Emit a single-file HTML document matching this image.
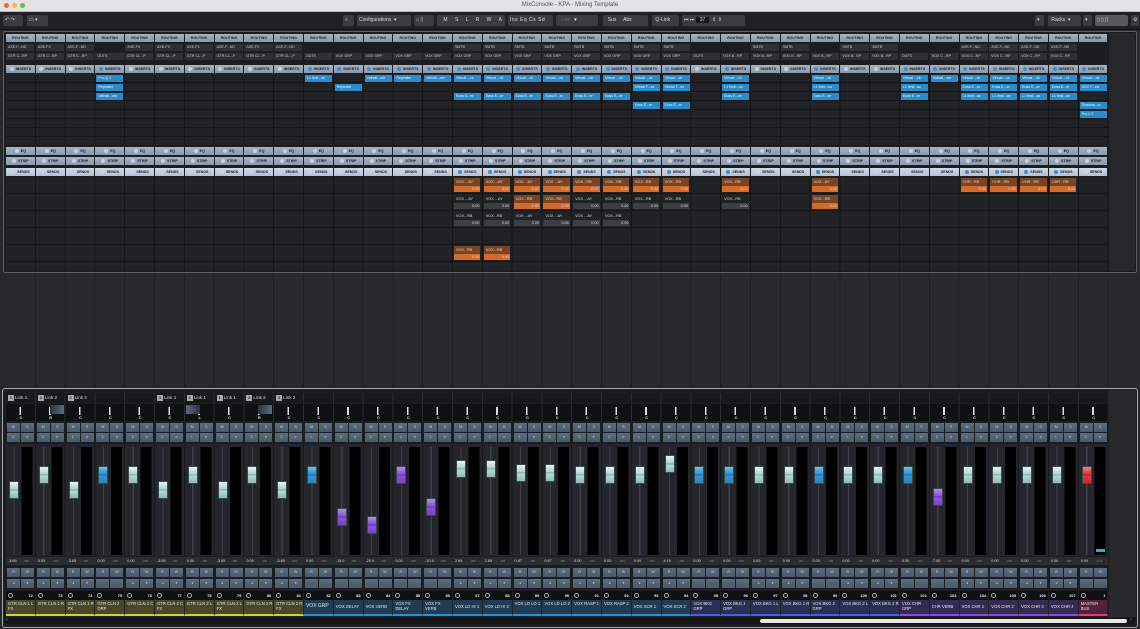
<!DOCTYPE html>
<html><head><meta charset="utf-8"><style>
*{box-sizing:border-box;margin:0;padding:0}
body{width:1140px;height:629px;overflow:hidden;background:#26282c;font-family:"Liberation Sans",sans-serif;position:relative;color:#ddd}
i,em,s,b{font-style:normal;text-decoration:none}
.a{position:absolute}
.r{position:absolute;left:6px;display:flex}
.r>*{width:29.8px;flex:none;position:relative;overflow:hidden;white-space:nowrap;font-style:normal}
.title{left:0;top:0;width:1140px;height:12px;background:#e4e2e4;color:#555;font-size:6px;text-align:center;line-height:11px;border-bottom:1px solid #bbb}
.dot{width:5px;height:5px;border-radius:50%;top:3px}
.tb{left:0;top:12px;width:1140px;height:18px;background:#202124;border-bottom:1px solid #111}
.bt{position:absolute;top:15px;height:11px;background:#3a3c40;border-radius:2px;color:#ddd;font-size:5px;line-height:11px;padding:0 2px;white-space:nowrap}
.hd>*{height:8px;font-size:3.6px;font-weight:bold;color:#1a1d22;line-height:8px;text-align:center;border-right:1px solid #1c1d20;background:linear-gradient(#a6b3c3,#8a98ab)}
.hd.sd>*{background:linear-gradient(#ced9e5,#b3c1d1)}
.hd .o{display:inline-block;width:4px;height:4px;border-radius:50%;background:#c8d0da;vertical-align:middle;margin-right:2px;margin-top:-1px}
.hd .b{background:#3b8fd0}
.sl>*{height:8px;padding:1px 1.5px 0 0}
.sl span{display:block;height:7px;background:#2e3034;font-size:3.6px;line-height:7px;color:#ccc;padding-left:2px}
.pl{position:absolute;left:1px;width:27px;height:7px;background:#2b8ccc;color:#e8f4ff;font-size:3.6px;line-height:7px;padding-left:2px}
.sn{position:absolute;left:1px;width:26.5px;height:15px;font-size:3.8px;color:#ddd}
.sn b{display:block;height:8px;line-height:8px;font-weight:normal;padding-left:2px}
.sn i{display:block;height:6px;line-height:6px;text-align:right;padding-right:1px;background:#3b3e43}
.sn.or b{background:#7a4322}
.sn.or i{background:#d36b2c}
.cap{position:absolute;left:3px;width:10px;height:18px;border-radius:1px;background:linear-gradient(#e3f5f2,#a9d3cd 45%,#6f9c96 50%,#b5dcd6 55%,#8fbab4);border:1px solid #3a4a48}
.cap.bl{background:linear-gradient(#6cc0f0,#2f8fd0 45%,#1d5f90 50%,#3696d6 55%,#2a80bc)}
.cap.pu{background:linear-gradient(#b88af2,#8a4fd8 45%,#52289a 50%,#8d55dc 55%,#7642c4)}
.cap.rd{background:linear-gradient(#ff7a80,#e0303a 45%,#8a1018 50%,#e23a42 55%,#c8262e)}
.btn2>*{height:10px;padding:1px 0 0 1px}
.btn2 span{float:left;width:13px;height:9px;margin-right:1px;background:linear-gradient(#5e6c80,#4b586a);font-size:3.6px;line-height:9px;text-align:center;color:#c8d2de}
.val>*{height:8px;font-size:3.8px;line-height:8px;color:#ddd}
.val span{position:absolute;left:2px}
.val em{position:absolute;left:17px;color:#888}
.num>*{height:9px;background:#0e0f10;font-size:4px;font-weight:bold;line-height:9px;text-align:right;padding-right:2px;color:#eee;border-right:1px solid #222}
.num>* s{position:absolute;left:2px;top:2px;width:5px;height:5px;border:0.7px solid #aaa;border-radius:50%}
.nm>*{height:16px;font-size:4.2px;line-height:4.8px;padding:2px 0 0 2px;color:#e8e8e8;white-space:normal;border-right:1px solid #222}
.g{background:#47482a;border-bottom:2px solid #c9d63a}
.u{background:#1f3b56;border-bottom:2px solid #2f8ed8}
.k{background:#2b2f58;border-bottom:2px solid #4a5ee0}
.p{background:#352a55;border-bottom:2px solid #8a4ae0}
.m{background:#552038;border-bottom:2px solid #e03a7a}
.lk{position:absolute;top:1px;left:2px;font-size:4.6px;color:#ddd;line-height:7px}
.lk b{display:inline-block;width:6px;height:6px;background:#aaa;color:#222;font-size:4px;text-align:center;line-height:6px;margin-right:1px}
</style></head><body>

<div class="a title">MixConsole - KPA - Mixing Template</div>
<div class="a dot" style="left:4px;background:#ec5f57"></div>
<div class="a dot" style="left:12px;background:#f5bd2e"></div>
<div class="a dot" style="left:20px;background:#5ec43f"></div>

<div class="a tb"></div>
<div class="bt" style="left:3px;width:20px">↶ ↷</div>
<div class="bt" style="left:27px;width:21px">▭ ▾</div>
<div class="bt" style="left:343px;width:11px">⌕</div>
<div class="bt" style="left:357px;width:54px">Configurations&nbsp;&nbsp;▾</div>
<div class="bt" style="left:414px;width:20px">⌂ ▯</div>
<div class="bt" style="left:437px;width:68px;letter-spacing:3px">&nbsp;M S L R W A</div>
<div class="bt" style="left:508px;width:45px;letter-spacing:.5px">Ins Eq Cs Sd</div>
<div class="bt" style="left:556px;width:42px;color:#666">&nbsp;&nbsp;Link &nbsp;&nbsp;<span style="color:#fff">▾</span></div>
<div class="bt" style="left:603px;width:45px">&nbsp;&nbsp;Sus &nbsp;&nbsp;&nbsp; Abs</div>
<div class="bt" style="left:652px;width:27px">&nbsp;Q-Link</div>
<div class="bt" style="left:682px;width:63px">⏮ ⏭ <span style="background:#151617;padding:0 4px">37</span>&nbsp;&nbsp;⇕ ⇕</div>
<div class="bt" style="left:1035px;width:9px">▾</div>
<div class="bt" style="left:1048px;width:33px">&nbsp;Racks &nbsp;▾</div>
<div class="bt" style="left:1083px;width:9px">▾</div>
<div class="bt" style="left:1095px;width:33px;background:#55585e">▯ ▯ ▯</div>
<div class="bt" style="left:1131px;width:8px">⚙</div>

<!-- upper panel -->
<div class="a" style="left:3px;top:31px;width:1134px;height:242px;background:#1c1d20;border:1px solid #5d6066;border-radius:2px"></div>
<div class="a" style="left:1109px;top:33px;width:26px;height:238px;background:#25272a"></div>

<div class="r hd" style="top:34px"><i>ROUTING</i><i>ROUTING</i><i>ROUTING</i><i>ROUTING</i><i>ROUTING</i><i>ROUTING</i><i>ROUTING</i><i>ROUTING</i><i>ROUTING</i><i>ROUTING</i><i>ROUTING</i><i>ROUTING</i><i>ROUTING</i><i>ROUTING</i><i>ROUTING</i><i>ROUTING</i><i>ROUTING</i><i>ROUTING</i><i>ROUTING</i><i>ROUTING</i><i>ROUTING</i><i>ROUTING</i><i>ROUTING</i><i>ROUTING</i><i>ROUTING</i><i>ROUTING</i><i>ROUTING</i><i>ROUTING</i><i>ROUTING</i><i>ROUTING</i><i>ROUTING</i><i>ROUTING</i><i>ROUTING</i><i>ROUTING</i><i>ROUTING</i><i>ROUTING</i><i>ROUTING</i></div>
<div class="r sl" style="top:43px"><i><span>AXE-F...ND</span></i><i><span>AXE-FX</span></i><i><span>AXE-F...ND</span></i><i></i><i><span>AXE-FX</span></i><i><span>AXE-FX</span></i><i><span>AXE-FX</span></i><i><span>AXE-F...ND</span></i><i><span>AXE-FX</span></i><i><span>AXE-F...ND</span></i><i></i><i></i><i></i><i></i><i></i><i><span>SMTB</span></i><i><span>SMTB</span></i><i><span>SMTB</span></i><i><span>SMTB</span></i><i><span>SMTB</span></i><i><span>SMTB</span></i><i><span>SMTB</span></i><i><span>SMTB</span></i><i></i><i></i><i><span>SMTB</span></i><i><span>SMTB</span></i><i></i><i><span>SMTB</span></i><i><span>SMTB</span></i><i></i><i></i><i><span>AXE-F...ND</span></i><i><span>AXE-F...ND</span></i><i><span>AXE-F...ND</span></i><i><span>AXE-F...ND</span></i><i></i></div>
<div class="r sl" style="top:52px"><i><span>GTR C...RP</span></i><i><span>GTR C...RP</span></i><i><span>GTR C...RP</span></i><i><span>OUTS</span></i><i><span>GTR CL...P</span></i><i><span>GTR CL...P</span></i><i><span>GTR CL...P</span></i><i><span>GTR CL...P</span></i><i><span>GTR CL...P</span></i><i><span>GTR CL...P</span></i><i><span>OUTS</span></i><i><span>VOX GRP</span></i><i><span>VOX GRP</span></i><i><span>VOX GRP</span></i><i><span>VOX GRP</span></i><i><span>VOX GRP</span></i><i><span>VOX GRP</span></i><i><span>VOX GRP</span></i><i><span>VOX GRP</span></i><i><span>VOX GRP</span></i><i><span>VOX GRP</span></i><i><span>VOX GRP</span></i><i><span>VOX GRP</span></i><i><span>OUTS</span></i><i><span>VOX B...RP</span></i><i><span>VOX B...RP</span></i><i><span>VOX B...RP</span></i><i><span>VOX B...RP</span></i><i><span>VOX B...RP</span></i><i><span>VOX B...RP</span></i><i><span>OUTS</span></i><i><span>VOX C...RP</span></i><i><span>VOX C...RP</span></i><i><span>VOX C...RP</span></i><i><span>VOX C...RP</span></i><i><span>VOX C...RP</span></i><i></i></div>

<div class="r hd" style="top:65px"><i><s class="o"></s>INSERTS</i><i><s class="o"></s>INSERTS</i><i><s class="o"></s>INSERTS</i><i><s class="o b"></s>INSERTS</i><i><s class="o"></s>INSERTS</i><i><s class="o"></s>INSERTS</i><i><s class="o"></s>INSERTS</i><i><s class="o"></s>INSERTS</i><i><s class="o"></s>INSERTS</i><i><s class="o"></s>INSERTS</i><i><s class="o b"></s>INSERTS</i><i><s class="o b"></s>INSERTS</i><i><s class="o b"></s>INSERTS</i><i><s class="o b"></s>INSERTS</i><i><s class="o b"></s>INSERTS</i><i><s class="o b"></s>INSERTS</i><i><s class="o b"></s>INSERTS</i><i><s class="o b"></s>INSERTS</i><i><s class="o b"></s>INSERTS</i><i><s class="o b"></s>INSERTS</i><i><s class="o b"></s>INSERTS</i><i><s class="o b"></s>INSERTS</i><i><s class="o b"></s>INSERTS</i><i><s class="o"></s>INSERTS</i><i><s class="o b"></s>INSERTS</i><i><s class="o"></s>INSERTS</i><i><s class="o"></s>INSERTS</i><i><s class="o b"></s>INSERTS</i><i><s class="o"></s>INSERTS</i><i><s class="o"></s>INSERTS</i><i><s class="o b"></s>INSERTS</i><i><s class="o b"></s>INSERTS</i><i><s class="o b"></s>INSERTS</i><i><s class="o b"></s>INSERTS</i><i><s class="o b"></s>INSERTS</i><i><s class="o b"></s>INSERTS</i><i><s class="o b"></s>INSERTS</i></div>
<div class="a" style="left:6px;top:74px;width:1102.6px;height:71px;background:repeating-linear-gradient(90deg,transparent 0 28.8px,#141517 28.8px 29.8px),repeating-linear-gradient(180deg,#212225 0 8px,#151618 8px 9px)"></div>
<div class="r" style="top:74px;height:72px"><i></i><i></i><i></i><i><span class="pl" style="top:1px">Pro-Q 3</span><span class="pl" style="top:10px">Repeater</span><span class="pl" style="top:19px">Valhall...om</span></i><i></i><i></i><i></i><i></i><i></i><i></i><i><span class="pl" style="top:1px">L1 limit...ac</span></i><i><span class="pl" style="top:10px">Repeater</span></i><i><span class="pl" style="top:1px">Valhall...om</span></i><i><span class="pl" style="top:1px">Repeater</span></i><i><span class="pl" style="top:1px">Valhall...om</span></i><i><span class="pl" style="top:1px">Virtual ...ck</span><span class="pl" style="top:19px">Eoss E...er</span></i><i><span class="pl" style="top:1px">Virtual ...ck</span><span class="pl" style="top:19px">Eoss E...er</span></i><i><span class="pl" style="top:1px">Virtual ...ck</span><span class="pl" style="top:19px">Eoss E...er</span></i><i><span class="pl" style="top:1px">Virtual ...ck</span><span class="pl" style="top:19px">Eoss E...er</span></i><i><span class="pl" style="top:1px">Virtual ...ck</span><span class="pl" style="top:19px">Eoss E...er</span></i><i><span class="pl" style="top:1px">Virtual ...ck</span><span class="pl" style="top:19px">Eoss E...er</span></i><i><span class="pl" style="top:1px">Virtual ...ck</span><span class="pl" style="top:10px">Virtual T...ex</span><span class="pl" style="top:28px">Eoss E...er</span></i><i><span class="pl" style="top:1px">Virtual ...ck</span><span class="pl" style="top:10px">Virtual T...ex</span><span class="pl" style="top:28px">Eoss E...er</span></i><i></i><i><span class="pl" style="top:1px">Virtual ...ck</span><span class="pl" style="top:10px">L1 limit...no</span><span class="pl" style="top:19px">Eoss E...er</span></i><i></i><i></i><i><span class="pl" style="top:1px">Virtual ...ck</span><span class="pl" style="top:10px">L1 limit...no</span><span class="pl" style="top:19px">Eoss E...er</span></i><i></i><i></i><i><span class="pl" style="top:1px">Virtual ...ck</span><span class="pl" style="top:10px">L1 limit...ac</span><span class="pl" style="top:19px">Eoss E...er</span></i><i><span class="pl" style="top:1px">Valhall...om</span></i><i><span class="pl" style="top:1px">Virtual ...ck</span><span class="pl" style="top:10px">Eoss E...er</span><span class="pl" style="top:19px">L1 limit...ac</span></i><i><span class="pl" style="top:1px">Virtual ...ck</span><span class="pl" style="top:10px">Eoss E...er</span><span class="pl" style="top:19px">L1 limit...ac</span></i><i><span class="pl" style="top:1px">Virtual ...ck</span><span class="pl" style="top:10px">Eoss E...er</span><span class="pl" style="top:19px">L1 limit...ac</span></i><i><span class="pl" style="top:1px">Virtual ...ck</span><span class="pl" style="top:10px">Eoss E...er</span><span class="pl" style="top:19px">L1 limit...ac</span></i><i><span class="pl" style="top:1px">Virtual ...ck</span><span class="pl" style="top:10px">VSC F...ed</span><span class="pl" style="top:28px">Shadow...or</span><span class="pl" style="top:37px">Pro-L 2</span></i></div>

<div class="r hd" style="top:147px"><i><s class="o"></s>EQ</i><i><s class="o"></s>EQ</i><i><s class="o"></s>EQ</i><i><s class="o"></s>EQ</i><i><s class="o"></s>EQ</i><i><s class="o"></s>EQ</i><i><s class="o"></s>EQ</i><i><s class="o"></s>EQ</i><i><s class="o"></s>EQ</i><i><s class="o"></s>EQ</i><i><s class="o"></s>EQ</i><i><s class="o"></s>EQ</i><i><s class="o"></s>EQ</i><i><s class="o"></s>EQ</i><i><s class="o"></s>EQ</i><i><s class="o"></s>EQ</i><i><s class="o"></s>EQ</i><i><s class="o"></s>EQ</i><i><s class="o"></s>EQ</i><i><s class="o"></s>EQ</i><i><s class="o"></s>EQ</i><i><s class="o"></s>EQ</i><i><s class="o"></s>EQ</i><i><s class="o"></s>EQ</i><i><s class="o"></s>EQ</i><i><s class="o"></s>EQ</i><i><s class="o"></s>EQ</i><i><s class="o"></s>EQ</i><i><s class="o"></s>EQ</i><i><s class="o"></s>EQ</i><i><s class="o"></s>EQ</i><i><s class="o"></s>EQ</i><i><s class="o"></s>EQ</i><i><s class="o"></s>EQ</i><i><s class="o"></s>EQ</i><i><s class="o"></s>EQ</i><i><s class="o"></s>EQ</i></div>
<div class="r hd" style="top:157px"><i><s class="o"></s>STRIP</i><i><s class="o"></s>STRIP</i><i><s class="o"></s>STRIP</i><i><s class="o"></s>STRIP</i><i><s class="o"></s>STRIP</i><i><s class="o"></s>STRIP</i><i><s class="o"></s>STRIP</i><i><s class="o"></s>STRIP</i><i><s class="o"></s>STRIP</i><i><s class="o"></s>STRIP</i><i><s class="o"></s>STRIP</i><i><s class="o"></s>STRIP</i><i><s class="o"></s>STRIP</i><i><s class="o"></s>STRIP</i><i><s class="o"></s>STRIP</i><i><s class="o"></s>STRIP</i><i><s class="o"></s>STRIP</i><i><s class="o"></s>STRIP</i><i><s class="o"></s>STRIP</i><i><s class="o"></s>STRIP</i><i><s class="o"></s>STRIP</i><i><s class="o"></s>STRIP</i><i><s class="o"></s>STRIP</i><i><s class="o"></s>STRIP</i><i><s class="o"></s>STRIP</i><i><s class="o"></s>STRIP</i><i><s class="o"></s>STRIP</i><i><s class="o"></s>STRIP</i><i><s class="o"></s>STRIP</i><i><s class="o"></s>STRIP</i><i><s class="o"></s>STRIP</i><i><s class="o"></s>STRIP</i><i><s class="o"></s>STRIP</i><i><s class="o"></s>STRIP</i><i><s class="o"></s>STRIP</i><i><s class="o"></s>STRIP</i><i><s class="o"></s>STRIP</i></div>
<div class="r hd sd" style="top:168px"><i><s class="o"></s>SENDS</i><i><s class="o"></s>SENDS</i><i><s class="o"></s>SENDS</i><i><s class="o"></s>SENDS</i><i><s class="o"></s>SENDS</i><i><s class="o"></s>SENDS</i><i><s class="o"></s>SENDS</i><i><s class="o"></s>SENDS</i><i><s class="o"></s>SENDS</i><i><s class="o"></s>SENDS</i><i><s class="o"></s>SENDS</i><i><s class="o"></s>SENDS</i><i><s class="o"></s>SENDS</i><i><s class="o"></s>SENDS</i><i><s class="o"></s>SENDS</i><i><s class="o b"></s>SENDS</i><i><s class="o b"></s>SENDS</i><i><s class="o b"></s>SENDS</i><i><s class="o b"></s>SENDS</i><i><s class="o b"></s>SENDS</i><i><s class="o b"></s>SENDS</i><i><s class="o b"></s>SENDS</i><i><s class="o b"></s>SENDS</i><i><s class="o"></s>SENDS</i><i><s class="o b"></s>SENDS</i><i><s class="o"></s>SENDS</i><i><s class="o"></s>SENDS</i><i><s class="o b"></s>SENDS</i><i><s class="o"></s>SENDS</i><i><s class="o"></s>SENDS</i><i><s class="o"></s>SENDS</i><i><s class="o"></s>SENDS</i><i><s class="o b"></s>SENDS</i><i><s class="o b"></s>SENDS</i><i><s class="o b"></s>SENDS</i><i><s class="o b"></s>SENDS</i><i><s class="o"></s>SENDS</i></div>
<div class="a" style="left:6px;top:177px;width:1102.6px;height:94px;background:repeating-linear-gradient(90deg,transparent 0 28.8px,#141517 28.8px 29.8px),repeating-linear-gradient(180deg,#212225 0 16px,#151618 16px 17px)"></div>
<div class="r" style="top:178px;height:92px"><i></i><i></i><i></i><i></i><i></i><i></i><i></i><i></i><i></i><i></i><i></i><i></i><i></i><i></i><i></i>
<i><span class="sn or" style="top:0"><b>VOX ...AY</b><i>0.00</i></span><span class="sn" style="top:17px"><b>VOX ...AY</b><i>0.00</i></span><span class="sn" style="top:34px"><b>VOX...RB</b><i>0.00</i></span><span class="sn or" style="top:68px"><b>VOX...RB</b><i>0.00</i></span></i>
<i><span class="sn or" style="top:0"><b>VOX ...AY</b><i>0.00</i></span><span class="sn" style="top:17px"><b>VOX ...AY</b><i>0.00</i></span><span class="sn" style="top:34px"><b>VOX...RB</b><i>0.00</i></span><span class="sn or" style="top:68px"><b>VOX...RB</b><i>0.00</i></span></i>
<i><span class="sn or" style="top:0"><b>VOX ...AY</b><i>0.00</i></span><span class="sn or" style="top:17px"><b>VOX...RB</b><i>0.00</i></span><span class="sn" style="top:34px"><b>VOX ...AY</b><i>0.00</i></span></i>
<i><span class="sn or" style="top:0"><b>VOX ...AY</b><i>0.00</i></span><span class="sn or" style="top:17px"><b>VOX...RB</b><i>0.00</i></span><span class="sn" style="top:34px"><b>VOX ...AY</b><i>0.00</i></span></i>
<i><span class="sn or" style="top:0"><b>VOX...RB</b><i>0.00</i></span><span class="sn" style="top:17px"><b>VOX ...AY</b><i>0.00</i></span><span class="sn" style="top:34px"><b>VOX ...AY</b><i>0.00</i></span></i>
<i><span class="sn or" style="top:0"><b>VOX...RB</b><i>0.00</i></span><span class="sn" style="top:17px"><b>VOX...RB</b><i>0.00</i></span><span class="sn" style="top:34px"><b>VOX...RB</b><i>0.00</i></span></i>
<i><span class="sn or" style="top:0"><b>VOX...RB</b><i>0.00</i></span><span class="sn" style="top:17px"><b>VOX...RB</b><i>0.00</i></span></i>
<i><span class="sn or" style="top:0"><b>VOX...RB</b><i>0.00</i></span><span class="sn" style="top:17px"><b>VOX...RB</b><i>0.00</i></span></i>
<i></i>
<i><span class="sn or" style="top:0"><b>VOX...RB</b><i>4.00</i></span><span class="sn" style="top:17px"><b>VOX...RB</b><i>0.00</i></span></i>
<i></i><i></i>
<i><span class="sn or" style="top:0"><b>VOX...AY</b><i>4.00</i></span><span class="sn or" style="top:17px"><b>VOX...RB</b><i>0.00</i></span></i>
<i></i><i></i><i></i><i></i>
<i><span class="sn or" style="top:0"><b>CHR...RB</b><i>0.00</i></span></i>
<i><span class="sn or" style="top:0"><b>CHR...RB</b><i>0.00</i></span></i>
<i><span class="sn or" style="top:0"><b>CHR...RB</b><i>0.00</i></span></i>
<i><span class="sn or" style="top:0"><b>CHR...RB</b><i>0.00</i></span></i>
<i></i></div>

<!-- gap -->
<div class="a" style="left:6px;top:274px;width:1102.6px;height:113px;background:repeating-linear-gradient(90deg,#27292d 0 28.8px,#1d1e21 28.8px 29.8px)"></div>

<!-- lower panel -->
<div class="a" style="left:2px;top:388px;width:1136px;height:240px;background:#1c1d20;border:1px solid #a6a9ae;border-radius:3px"></div>
<div class="a" style="left:1109px;top:390px;width:27px;height:227px;background:#27292c"></div>
<div class="a" style="left:6px;top:393px;width:1102.6px;height:10px;background:repeating-linear-gradient(90deg,#17181a 0 28.8px,#2a2c30 28.8px 29.8px)"></div>
<div class="r" style="top:393px;height:10px"><i><span class="lk"><b>1</b>Link 1</span></i><i><span class="lk"><b>2</b>Link 2</span></i><i><span class="lk"><b>2</b>Link 2</span></i><i></i><i></i><i><span class="lk"><b>1</b>Link 1</span></i><i><span class="lk"><b>1</b>Link 1</span></i><i><span class="lk"><b>1</b>Link 1</span></i><i><span class="lk"><b>2</b>Link 2</span></i><i><span class="lk"><b>2</b>Link 2</span></i></div>
<div class="a" style="left:6px;top:404px;width:1102.6px;height:17px;background:repeating-linear-gradient(90deg,#0f1011 0 28.8px,#2a2c30 28.8px 29.8px)"></div>
<div class="a" style="left:6px;top:407px;width:1102.6px;height:8px;background:repeating-linear-gradient(90deg,transparent 0 13.4px,#d8dde2 13.4px 15px,transparent 15px 29.8px)"></div>
<div class="r" style="top:415px;height:6px;font-size:4px;color:#ddd;text-align:center;font-weight:bold"><i>C</i><i>R</i><i>C</i><i>C</i><i>C</i><i>C</i><i>L</i><i>C</i><i>R</i><i>C</i><i>C</i><i>C</i><i>C</i><i>C</i><i>C</i><i>C</i><i>C</i><i>C</i><i>C</i><i>C</i><i>C</i><i>C</i><i>C</i><i>C</i><i>C</i><i>C</i><i>C</i><i>C</i><i>C</i><i>C</i><i>C</i><i>C</i><i>C</i><i>C</i><i>C</i><i>C</i><i>C</i></div>
<div class="a" style="left:50px;top:405px;width:14px;height:9px;background:linear-gradient(90deg,#2a3440,#5c6c7c)"></div>
<div class="a" style="left:186px;top:405px;width:14px;height:9px;background:linear-gradient(90deg,#5c6c7c,#2a3440)"></div>
<div class="a" style="left:258px;top:405px;width:14px;height:9px;background:linear-gradient(90deg,#2a3440,#5c6c7c)"></div>
<div class="r btn2" style="top:422px"><i><span>M</span><span>S</span></i><i><span>M</span><span>S</span></i><i><span>M</span><span>S</span></i><i><span>M</span><span>S</span></i><i><span>M</span><span>S</span></i><i><span>M</span><span>S</span></i><i><span>M</span><span>S</span></i><i><span>M</span><span>S</span></i><i><span>M</span><span>S</span></i><i><span>M</span><span>S</span></i><i><span>M</span><span>S</span></i><i><span>M</span><span>S</span></i><i><span>M</span><span>S</span></i><i><span>M</span><span>S</span></i><i><span>M</span><span>S</span></i><i><span>M</span><span>S</span></i><i><span>M</span><span>S</span></i><i><span>M</span><span>S</span></i><i><span>M</span><span>S</span></i><i><span>M</span><span>S</span></i><i><span>M</span><span>S</span></i><i><span>M</span><span>S</span></i><i><span>M</span><span>S</span></i><i><span>M</span><span>S</span></i><i><span>M</span><span>S</span></i><i><span>M</span><span>S</span></i><i><span>M</span><span>S</span></i><i><span>M</span><span>S</span></i><i><span>M</span><span>S</span></i><i><span>M</span><span>S</span></i><i><span>M</span><span>S</span></i><i><span>M</span><span>S</span></i><i><span>M</span><span>S</span></i><i><span>M</span><span>S</span></i><i><span>M</span><span>S</span></i><i><span>M</span><span>S</span></i><i><span>M</span><span>S</span></i></div>
<div class="r btn2" style="top:432px"><i><span>L</span><span>e</span></i><i><span>L</span><span>e</span></i><i><span>L</span><span>e</span></i><i><span>L</span><span>e</span></i><i><span>L</span><span>e</span></i><i><span>L</span><span>e</span></i><i><span>L</span><span>e</span></i><i><span>L</span><span>e</span></i><i><span>L</span><span>e</span></i><i><span>L</span><span>e</span></i><i><span>L</span><span>e</span></i><i><span>L</span><span>e</span></i><i><span>L</span><span>e</span></i><i><span>L</span><span>e</span></i><i><span>L</span><span>e</span></i><i><span>L</span><span>e</span></i><i><span>L</span><span>e</span></i><i><span>L</span><span>e</span></i><i><span>L</span><span>e</span></i><i><span>L</span><span>e</span></i><i><span>L</span><span>e</span></i><i><span>L</span><span>e</span></i><i><span>L</span><span>e</span></i><i><span>L</span><span>e</span></i><i><span>L</span><span>e</span></i><i><span>L</span><span>e</span></i><i><span>L</span><span>e</span></i><i><span>L</span><span>e</span></i><i><span>L</span><span>e</span></i><i><span>L</span><span>e</span></i><i><span>L</span><span>e</span></i><i><span>L</span><span>e</span></i><i><span>L</span><span>e</span></i><i><span>L</span><span>e</span></i><i><span>L</span><span>e</span></i><i><span>L</span><span>e</span></i><i><span>L</span><span>e</span></i></div>
<div class="a" style="left:6px;top:444px;width:1102.6px;height:112px;background:repeating-linear-gradient(90deg,#24262a 0 28.8px,#17181a 28.8px 29.8px)"></div>
<div class="a" style="left:6px;top:447px;width:1102.6px;height:108px;background:repeating-linear-gradient(90deg,transparent 0 7.4px,#3e4146 7.4px 8.6px,transparent 8.6px 15.5px,#000 15.5px 26.5px,transparent 26.5px 29.8px)"></div>
<div class="r" style="top:446px;height:110px"><i><s class="cap" style="top:35px"></s></i><i><s class="cap" style="top:20px"></s></i><i><s class="cap" style="top:35px"></s></i><i><s class="cap bl" style="top:20px"></s></i><i><s class="cap" style="top:20px"></s></i><i><s class="cap" style="top:35px"></s></i><i><s class="cap" style="top:20px"></s></i><i><s class="cap" style="top:35px"></s></i><i><s class="cap" style="top:20px"></s></i><i><s class="cap" style="top:35px"></s></i><i><s class="cap bl" style="top:20px"></s></i><i><s class="cap pu" style="top:62px"></s></i><i><s class="cap pu" style="top:70px"></s></i><i><s class="cap pu" style="top:20px"></s></i><i><s class="cap pu" style="top:52px"></s></i><i><s class="cap" style="top:14px"></s></i><i><s class="cap" style="top:14px"></s></i><i><s class="cap" style="top:18px"></s></i><i><s class="cap" style="top:18px"></s></i><i><s class="cap" style="top:20px"></s></i><i><s class="cap" style="top:20px"></s></i><i><s class="cap" style="top:20px"></s></i><i><s class="cap" style="top:9px"></s></i><i><s class="cap bl" style="top:20px"></s></i><i><s class="cap bl" style="top:20px"></s></i><i><s class="cap" style="top:20px"></s></i><i><s class="cap" style="top:20px"></s></i><i><s class="cap bl" style="top:20px"></s></i><i><s class="cap" style="top:20px"></s></i><i><s class="cap" style="top:20px"></s></i><i><s class="cap bl" style="top:20px"></s></i><i><s class="cap pu" style="top:42px"></s></i><i><s class="cap" style="top:20px"></s></i><i><s class="cap" style="top:20px"></s></i><i><s class="cap" style="top:20px"></s></i><i><s class="cap" style="top:20px"></s></i><i><s class="cap rd" style="top:20px"></s></i></div>
<div class="a" style="left:1096px;top:549px;width:9px;height:3px;background:#3aa8d8"></div>
<div class="r val" style="top:557px;background:#2a2c30"><i><span>-3.65</span><em>-oo</em></i><i><span>0.05</span><em>-oo</em></i><i><span>-3.65</span><em>-oo</em></i><i><span>0.00</span><em>-oo</em></i><i><span>0.00</span><em>-oo</em></i><i><span>-3.65</span><em>-oo</em></i><i><span>0.00</span><em>-oo</em></i><i><span>-3.65</span><em>-oo</em></i><i><span>0.05</span><em>-oo</em></i><i><span>-3.65</span><em>-oo</em></i><i><span>0.00</span><em>-oo</em></i><i><span>-15.0</span><em>-oo</em></i><i><span>-20.0</span><em>-oo</em></i><i><span>0.00</span><em>-oo</em></i><i><span>-10.0</span><em>-oo</em></i><i><span>2.69</span><em>-oo</em></i><i><span>2.69</span><em>-oo</em></i><i><span>0.87</span><em>-oo</em></i><i><span>0.87</span><em>-oo</em></i><i><span>0.00</span><em>-oo</em></i><i><span>0.00</span><em>-oo</em></i><i><span>0.00</span><em>-oo</em></i><i><span>4.19</span><em>-oo</em></i><i><span>0.00</span><em>-oo</em></i><i><span>0.00</span><em>-oo</em></i><i><span>0.00</span><em>-oo</em></i><i><span>0.00</span><em>-oo</em></i><i><span>0.00</span><em>-oo</em></i><i><span>0.00</span><em>-oo</em></i><i><span>0.00</span><em>-oo</em></i><i><span>0.00</span><em>-oo</em></i><i><span>-7.00</span><em>-oo</em></i><i><span>0.00</span><em>-oo</em></i><i><span>0.00</span><em>-oo</em></i><i><span>0.00</span><em>-oo</em></i><i><span>0.00</span><em>-oo</em></i><i><span>0.00</span><em>-1.0</em></i></div>
<div class="r btn2" style="top:567px"><i><span>R</span><span>W</span></i><i><span>R</span><span>W</span></i><i><span>R</span><span>W</span></i><i><span>R</span><span>W</span></i><i><span>R</span><span>W</span></i><i><span>R</span><span>W</span></i><i><span>R</span><span>W</span></i><i><span>R</span><span>W</span></i><i><span>R</span><span>W</span></i><i><span>R</span><span>W</span></i><i><span>R</span><span>W</span></i><i><span>R</span><span>W</span></i><i><span>R</span><span>W</span></i><i><span>R</span><span>W</span></i><i><span>R</span><span>W</span></i><i><span>R</span><span>W</span></i><i><span>R</span><span>W</span></i><i><span>R</span><span>W</span></i><i><span>R</span><span>W</span></i><i><span>R</span><span>W</span></i><i><span>R</span><span>W</span></i><i><span>R</span><span>W</span></i><i><span>R</span><span>W</span></i><i><span>R</span><span>W</span></i><i><span>R</span><span>W</span></i><i><span>R</span><span>W</span></i><i><span>R</span><span>W</span></i><i><span>R</span><span>W</span></i><i><span>R</span><span>W</span></i><i><span>R</span><span>W</span></i><i><span>R</span><span>W</span></i><i><span>R</span><span>W</span></i><i><span>R</span><span>W</span></i><i><span>R</span><span>W</span></i><i><span>R</span><span>W</span></i><i><span>R</span><span>W</span></i><i><span>R</span><span>W</span></i></div>
<div class="r btn2" style="top:578px;height:11px"><i><span>◂</span><span>●</span></i><i><span>◂</span><span>●</span></i><i><span>◂</span><span>●</span></i><i><span></span><span></span></i><i><span>◂</span><span>●</span></i><i><span>◂</span><span>●</span></i><i><span>◂</span><span>●</span></i><i><span>◂</span><span>●</span></i><i><span>◂</span><span>●</span></i><i><span>◂</span><span>●</span></i><i><span></span><span></span></i><i><span></span><span></span></i><i><span></span><span></span></i><i><span></span><span></span></i><i><span></span><span></span></i><i><span>◂</span><span>●</span></i><i><span>◂</span><span>●</span></i><i><span>◂</span><span>●</span></i><i><span>◂</span><span>●</span></i><i><span>◂</span><span>●</span></i><i><span>◂</span><span>●</span></i><i><span>◂</span><span>●</span></i><i><span>◂</span><span>●</span></i><i><span></span><span></span></i><i><span></span><span></span></i><i><span>◂</span><span>●</span></i><i><span>◂</span><span>●</span></i><i><span></span><span></span></i><i><span>◂</span><span>●</span></i><i><span>◂</span><span>●</span></i><i><span></span><span></span></i><i><span></span><span></span></i><i><span>◂</span><span>●</span></i><i><span>◂</span><span>●</span></i><i><span>◂</span><span>●</span></i><i><span>◂</span><span>●</span></i><i><span></span><span></span></i></div>
<div class="r num" style="top:591px"><i><s></s>72</i><i><s></s>73</i><i><s></s>74</i><i><s></s>75</i><i><s></s>76</i><i><s></s>77</i><i><s></s>78</i><i><s></s>79</i><i><s></s>80</i><i><s></s>81</i><i><s></s>82</i><i><s></s>83</i><i><s></s>84</i><i><s></s>85</i><i><s></s>86</i><i><s></s>87</i><i><s></s>88</i><i><s></s>89</i><i><s></s>90</i><i><s></s>91</i><i><s></s>92</i><i><s></s>93</i><i><s></s>94</i><i><s></s>95</i><i><s></s>96</i><i><s></s>97</i><i><s></s>98</i><i><s></s>99</i><i><s></s>100</i><i><s></s>101</i><i><s></s>102</i><i><s></s>103</i><i><s></s>104</i><i><s></s>105</i><i><s></s>106</i><i><s></s>107</i><i><s></s>1</i></div>
<div class="r nm" style="top:600px"><i class="g">GTR CLN 1 L FX</i><i class="g">GTR CLN 1 R</i><i class="g">GTR CLN 1 R FX</i><i class="g">GTR CLN 2 GRP</i><i class="g">GTR CLN 2 C</i><i class="g">GTR CLN 2 C FX</i><i class="g">GTR CLN 2 L</i><i class="g">GTR CLN 2 L FX</i><i class="g">GTR CLN 2 R</i><i class="g">GTR CLN 2 R FX</i><i class="u" style="font-size:5px;padding-top:4px">VOX GRP</i><i class="u" style="padding-top:5px">VOX DELAY</i><i class="u" style="padding-top:5px">VOX VERB</i><i class="u">VOX FX DELAY</i><i class="u">VOX FX VERB</i><i class="u" style="padding-top:5px">VOX LD HI 1</i><i class="u" style="padding-top:5px">VOX LD HI 2</i><i class="u">VOX LD LO 1</i><i class="u">VOX LD LO 2</i><i class="u">VOX RASP 1</i><i class="u">VOX RASP 2</i><i class="u" style="padding-top:5px">VOX SCR 1</i><i class="u" style="padding-top:5px">VOX SCR 2</i><i class="k">VOX BKG GRP</i><i class="k">VOX BKG 1 GRP</i><i class="k">VOX BKG 1 L</i><i class="k">VOX BKG 1 R</i><i class="k">VOX BKG 2 GRP</i><i class="k">VOX BKG 2 L</i><i class="k">VOX BKG 2 R</i><i class="p">VOX CHR GRP</i><i class="p" style="padding-top:5px">CHR VERB</i><i class="p" style="padding-top:5px">VOX CHR 1</i><i class="p" style="padding-top:5px">VOX CHR 2</i><i class="p" style="padding-top:5px">VOX CHR 3</i><i class="p" style="padding-top:5px">VOX CHR 4</i><i class="m">MASTER BUS</i></div>
<div class="a" style="left:5px;top:618px;width:1130px;height:6px;background:#141517"></div>
<div class="a" style="left:760px;top:619px;width:367px;height:4px;background:#e8e8e8;border-radius:2px"></div>
<div class="a" style="left:6px;top:617px;font-size:5px;color:#aaa">‹</div>
<div class="a" style="left:1130px;top:617px;font-size:5px;color:#aaa">›</div>
</body></html>
